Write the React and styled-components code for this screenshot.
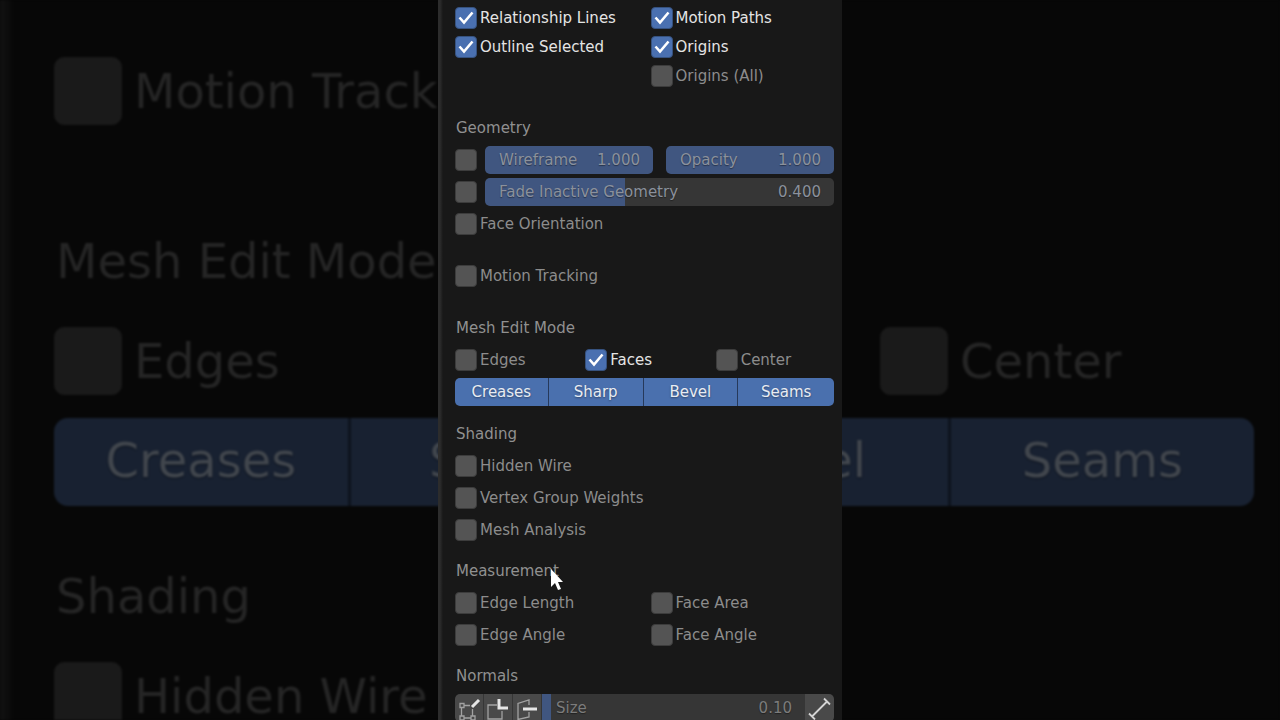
import React, { useState, useId } from 'react';
import styled, { createGlobalStyle } from 'styled-components';

function Check ({ label, on, big, hideLabel }) {
  const [checked, setChecked] = useState(!!on)
  return (
    <CheckLabel $big={big} $on={checked}>
      <CheckWrap $big={big}>
        <CheckBox
          type="checkbox"
          $big={big}
          checked={checked}
          aria-label={hideLabel ? label : undefined}
          onChange={() => setChecked(!checked)}
        />
        {checked && (
          <Tick viewBox="0 0 22 22">
            <path d="M4.5 10.5 L9 15.5 L17.5 5.5" />
          </Tick>
        )}
      </CheckWrap>
      {!hideLabel && <span>{label}</span>}
    </CheckLabel>
  )
}

function Slider ({ label, start, max = 1, digits = 3, plain }) {
  const id = useId()
  const [value, setValue] = useState(start)
  return (
    <SliderField $plain={plain}>
      <Range
        id={id}
        type="range"
        min="0"
        max={max}
        step="0.01"
        value={value}
        onChange={(e) => setValue(Number(e.target.value))}
        style={{ '--fill': `${(value / max) * 100}%` }}
      />
      <SliderText $plain={plain}>
        <label htmlFor={id}>{label}</label>
        <output htmlFor={id}>{value.toFixed(digits)}</output>
      </SliderText>
    </SliderField>
  )
}

const marks = ['Creases', 'Sharp', 'Bevel', 'Seams']

function Marks ({ big }) {
  return (
    <ButtonGroup $big={big}>
      {marks.map((m) => <MarkButton key={m} type="button" $big={big}>{m}</MarkButton>)}
    </ButtonGroup>
  )
}

function Backdrop () {
  return (
    <BackdropLayer aria-hidden="true">
      <Check big label="Motion Tracking" />
      <BigHeading $top={102}>Mesh Edit Mode</BigHeading>
      <BigColumns>
        <Check big label="Edges" />
        <Check big label="Center" />
      </BigColumns>
      <Marks big />
      <BigHeading $top={56}>Shading</BigHeading>
      <Check big label="Hidden Wire" />
    </BackdropLayer>
  )
}

function App () {
  return (
    <Page>
      <GlobalStyle />
      <Backdrop />
      <Panel>
        <Columns $count={2}>
          <Stack>
            <Check label="Relationship Lines" on />
            <Check label="Outline Selected" on />
          </Stack>
          <Stack>
            <Check label="Motion Paths" on />
            <Check label="Origins" on />
            <Check label="Origins (All)" />
          </Stack>
        </Columns>

        <Section $space={27}>
          <Heading>Geometry</Heading>
          <SliderRow>
            <Check label="Wireframe" hideLabel />
            <SliderGroup>
              <Slider label="Wireframe" start={1} />
              <Slider label="Opacity" start={1} />
            </SliderGroup>
          </SliderRow>
          <SliderRow>
            <Check label="Fade Inactive Geometry" hideLabel />
            <SliderGroup>
              <Slider label="Fade Inactive Geometry" start={0.4} />
            </SliderGroup>
          </SliderRow>
          <Row><Check label="Face Orientation" /></Row>
        </Section>

        <Section $space={24}>
          <Row><Check label="Motion Tracking" /></Row>
        </Section>

        <Section $space={24}>
          <Heading>Mesh Edit Mode</Heading>
          <Columns $count={3}>
            <Row><Check label="Edges" /></Row>
            <Row><Check label="Faces" on /></Row>
            <Row><Check label="Center" /></Row>
          </Columns>
          <Marks />
        </Section>

        <Section $space={14}>
          <Heading>Shading</Heading>
          <Row><Check label="Hidden Wire" /></Row>
          <Row><Check label="Vertex Group Weights" /></Row>
          <Row><Check label="Mesh Analysis" /></Row>
        </Section>

        <Section $space={13}>
          <Heading>
            Measurement
            <Cursor viewBox="0 0 14 24">
              <path d="M1 1 V19 L5 15 L8 22 L11 21 L8 14 H13 Z" />
            </Cursor>
          </Heading>
          <Columns $count={2}>
            <Row><Check label="Edge Length" /></Row>
            <Row><Check label="Face Area" /></Row>
          </Columns>
          <Columns $count={2}>
            <Row><Check label="Edge Angle" /></Row>
            <Row><Check label="Face Angle" /></Row>
          </Columns>
        </Section>

        <Section $space={13}>
          <Heading>Normals</Heading>
          <NormalsRow>
            <IconButton type="button" aria-label="Vertex normals">
              <svg viewBox="0 0 28 28">
                <path className="thin" d="M6.5 13 V22 M9 11.5 H15 M17.5 15 V22 M9 24 H16" />
                <path className="thin" d="M5 9.5 h4 v4 h-4 z M5 22 h4 v4 h-4 z M16 22 h4 v4 h-4 z" />
                <path className="thick" d="M17 13 L24 6" />
              </svg>
            </IconButton>
            <IconButton type="button" aria-label="Split normals">
              <svg viewBox="0 0 28 28">
                <path className="thin" d="M13 11 H4 V25 H18 V17" />
                <path className="thick" d="M15 5 V14 H24" />
              </svg>
            </IconButton>
            <IconButton type="button" aria-label="Face normals">
              <svg viewBox="0 0 28 28">
                <path className="thin" d="M16 11 V6 L5 9.5 V25.5 L16 23 V18" />
                <path className="thick" d="M10 15 H24" />
              </svg>
            </IconButton>
            <Slider label="Size" start={0.1} max={3} digits={2} plain />
            <IconButton type="button" aria-label="Constant screen size">
              <svg viewBox="0 0 28 28">
                <path className="mid" d="M7 22.5 L22 7.5 M4 19.5 L10 25.5 M19 4.5 L25 10.5" />
              </svg>
            </IconButton>
          </NormalsRow>
        </Section>
      </Panel>
    </Page>
  )
}

export default App

const GlobalStyle = createGlobalStyle`
  * {
    box-sizing: border-box;
  }
  body {
    margin: 0;
    background: #070707;
    font-family: 'DejaVu Sans', sans-serif;
  }
  button, input {
    font-family: inherit;
    margin: 0;
  }
`

const Page = styled.main`
  display: grid;
  grid-template-columns: 100%;
  height: 100vh;
  overflow: hidden;
`

const BackdropLayer = styled.div`
  grid-area: 1 / 1;
  padding: 57px 26px 0 54px;
  background: linear-gradient(to right, #121212 0, #0e0e0e 6px, #070707 14px);
  overflow: hidden;
  filter: blur(1px);
`

const Panel = styled.section`
  grid-area: 1 / 1;
  z-index: 1;
  justify-self: center;
  width: 100%;
  max-width: 404px;
  padding: 7px 8px 0 17px;
  background: linear-gradient(to right, #2c2c2c 0, #2c2c2c 2px, #181818 5px);
  font-size: 15px;
  overflow: hidden;
`

const Section = styled.section`
  display: flex;
  flex-direction: column;
  gap: 4px;
  margin-top: ${(p) => p.$space}px;
`

const Stack = styled.div`
  display: flex;
  flex-direction: column;
  gap: 7px;
`

const Columns = styled.div`
  display: grid;
  grid-template-columns: repeat(${(p) => p.$count}, 1fr);
  column-gap: 12px;
`

const BigColumns = styled.div`
  display: grid;
  grid-template-columns: 826px 1fr;
  margin: 32px 0 23px;
`

const Row = styled.div`
  display: flex;
  align-items: center;
  height: 28px;
`

const Heading = styled.h2`
  position: relative;
  margin: 0;
  padding-left: 1px;
  font-size: 15px;
  font-weight: normal;
  line-height: 28px;
  color: #909090;
`

const BigHeading = styled.h2`
  margin: ${(p) => p.$top}px 0 32px;
  padding-left: 2px;
  font-size: 48px;
  font-weight: normal;
  line-height: 68px;
  color: #252525;
`

const CheckLabel = styled.label`
  display: flex;
  align-items: center;
  gap: ${(p) => (p.$big ? 12 : 3)}px;
  height: ${(p) => (p.$big ? 68 : 22)}px;
  font-size: ${(p) => (p.$big ? 48 : 15)}px;
  line-height: ${(p) => (p.$big ? 66 : 22)}px;
  color: ${(p) => (p.$big ? '#252525' : p.$on ? '#e4e4e4' : '#8c8c8c')};
  white-space: nowrap;
`

const CheckWrap = styled.span`
  display: grid;
  flex: none;
  width: ${(p) => (p.$big ? 68 : 22)}px;
  height: ${(p) => (p.$big ? 68 : 22)}px;
`

const CheckBox = styled.input`
  grid-area: 1 / 1;
  appearance: none;
  width: 100%;
  height: 100%;
  border: 1px solid ${(p) => (p.$big ? '#191919' : '#3c3c3c')};
  border-radius: ${(p) => (p.$big ? 10 : 4)}px;
  background: ${(p) => (p.$big ? '#1a1a1a' : '#545454')};

  &:checked {
    background: #4a70b0;
    border-color: #36527f;
  }
`

const Tick = styled.svg`
  grid-area: 1 / 1;
  z-index: 1;
  pointer-events: none;
  fill: none;
  stroke: #fff;
  stroke-width: 2.6;
`

const SliderRow = styled.div`
  display: grid;
  grid-template-columns: 22px 1fr;
  align-items: center;
  column-gap: 8px;
`

const SliderGroup = styled.div`
  display: flex;
  gap: 13px;
`

const SliderField = styled.div`
  display: grid;
  flex: 1 1 0;
  min-width: 0;
  height: 28px;
  border-radius: ${(p) => (p.$plain ? 0 : 5)}px;
  overflow: hidden;
`

const Range = styled.input`
  grid-area: 1 / 1;
  appearance: none;
  width: 100%;
  height: 100%;
  background: linear-gradient(to right, #405680 var(--fill), #363636 var(--fill));

  &::-webkit-slider-thumb {
    appearance: none;
    width: 1px;
    height: 1px;
  }
`

const SliderText = styled.div`
  grid-area: 1 / 1;
  z-index: 1;
  display: flex;
  justify-content: space-between;
  padding: 0 13px 0 14px;
  line-height: 28px;
  color: ${(p) => (p.$plain ? '#7c7c7c' : '#8b919c')};
  text-shadow: 0 1px 1px rgba(0, 0, 0, 0.4);
  white-space: nowrap;
  pointer-events: none;
`

const ButtonGroup = styled.div`
  display: grid;
  grid-template-columns: 94fr 95fr 95fr 96fr;
  height: ${(p) => (p.$big ? 88 : 28)}px;
  border-radius: ${(p) => (p.$big ? 14 : 5)}px;
  overflow: hidden;
`

const MarkButton = styled.button`
  min-width: 0;
  padding: 0 0 ${(p) => (p.$big ? 4 : 0)}px;
  border: 0;
  border-right: ${(p) => (p.$big ? '3px solid #0d131d' : '1px solid #26395a')};
  background: ${(p) => (p.$big ? '#182131' : '#4a70ae')};
  color: ${(p) => (p.$big ? '#41464d' : '#e8ecf2')};
  font-size: ${(p) => (p.$big ? 48 : 15)}px;
  text-shadow: 0 1px 2px rgba(0, 0, 0, 0.4);

  &:last-child {
    border-right: 0;
  }
`

const NormalsRow = styled.div`
  display: flex;
  height: 28px;
  border-radius: 5px;
  overflow: hidden;
`

const IconButton = styled.button`
  flex: none;
  width: 29px;
  padding: 0;
  border: 0;
  border-right: 1px solid #363636;
  background: #494949;

  &:last-child {
    border-right: 0;
  }
  svg {
    display: block;
    width: 28px;
    height: 28px;
    fill: none;
  }
  .thin {
    stroke: #a2a2a2;
    stroke-width: 1.3;
  }
  .mid {
    stroke: #d4d4d4;
    stroke-width: 1.8;
  }
  .thick {
    stroke: #e6e6e6;
    stroke-width: 3;
  }
`

const Cursor = styled.svg`
  position: absolute;
  left: 95px;
  top: 11px;
  width: 14px;
  height: 24px;
  fill: #fff;
`
